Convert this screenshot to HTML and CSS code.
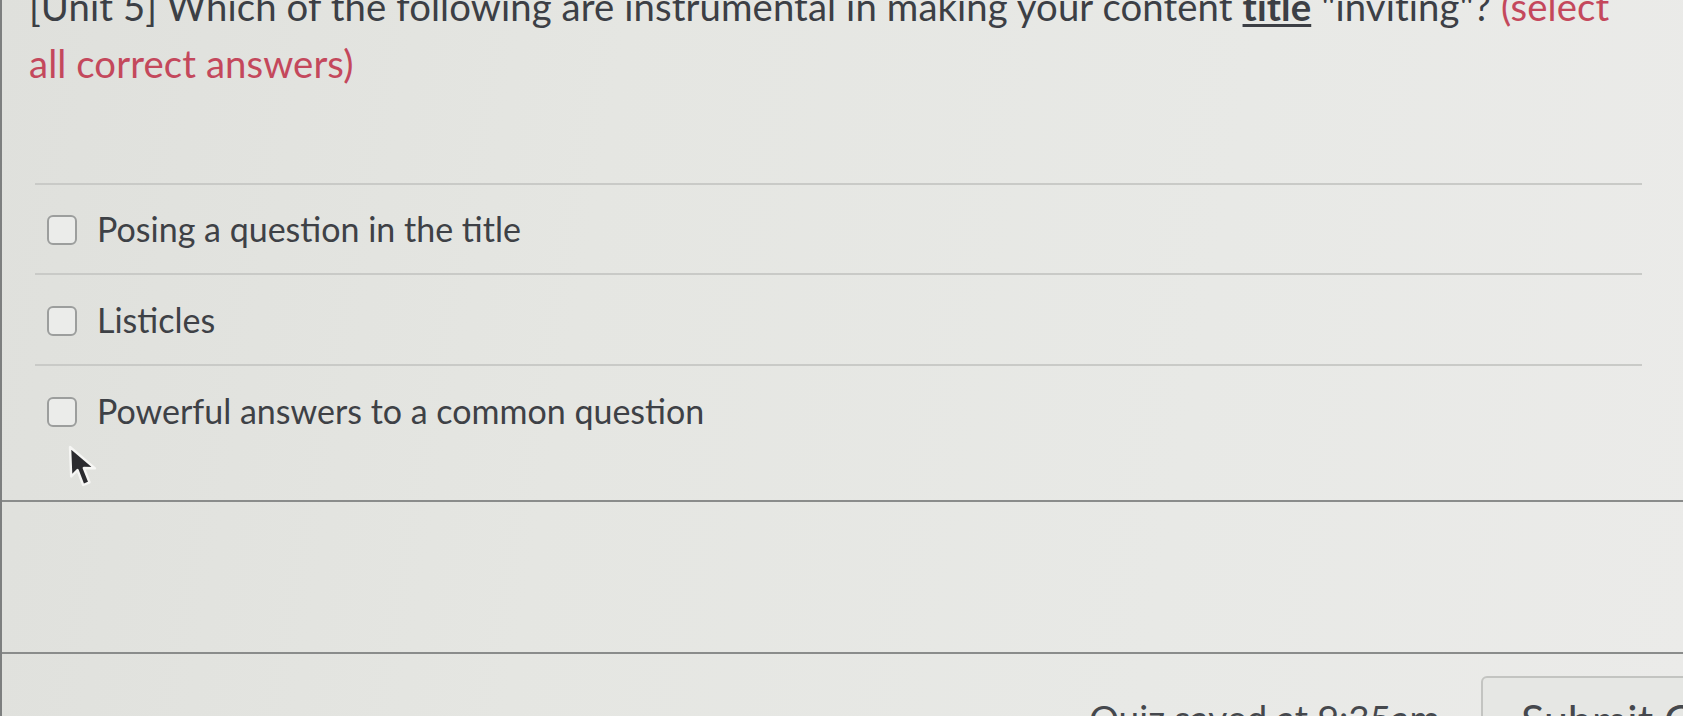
FILE: index.html
```html
<!DOCTYPE html>
<html lang="en">
<head>
<meta charset="utf-8">
<title>Quiz question</title>
<link rel="stylesheet" href="styles.css">
</head>
<body>
<div class="page">
  <section class="question">
    <div class="question-text">[Unit 5] Which of the following are instrumental in making your content <span class="em">title</span> "inviting"? <span class="hint">(select all correct answers)</span></div>
    <div class="answers">
      <label class="answer"><span class="box"></span><span class="label">Posing a question in the title</span></label>
      <label class="answer"><span class="box"></span><span class="label">Listicles</span></label>
      <label class="answer"><span class="box"></span><span class="label">Powerful answers to a common question</span></label>
    </div>
    <svg class="cursor" width="32" height="46" viewBox="0 0 32 46" aria-hidden="true">
      <path d="M4 3 L5.2 32.5 L11.5 26 L17.2 41 L23.5 38.3 L17.8 24 L29 24.3 Z" fill="#2b2b2f" stroke="#f6f6f4" stroke-width="2.4" stroke-linejoin="round"/>
    </svg>
  </section>
  <div class="gap"></div>
  <footer class="footer">
    <span class="saved">Quiz saved at 9:35am</span>
    <button class="submit" type="button">Submit Quiz</button>
  </footer>
</div>
</body>
</html>
```
FILE: styles.css
```css
html, body {
  margin: 0;
  padding: 0;
}
body {
  width: 1683px;
  height: 716px;
  overflow: hidden;
  background: linear-gradient(100deg, #dfe0dc 0%, #e5e6e2 35%, #e8e9e6 70%, #ebebe9 100%);
  font-family: Lato, "Noto Sans", sans-serif;
  color: #3c3f45;
}
.page {
  display: flex;
  flex-direction: column;
  height: 716px;
  box-sizing: border-box;
  border-left: 2px solid #7d7f7f;
}
.question {
  position: relative;
  border-bottom: 2px solid #8a8c8b;
  padding: 0 41px 0 27px;
  height: 502px;
  box-sizing: border-box;
  flex: none;
}
.question-text {
  font-size: 38.3px;
  line-height: 57px;
  margin-top: -22px;
  letter-spacing: 0.1px;
}
.em {
  font-weight: 700;
  text-decoration: underline;
  text-underline-offset: 3px;
}
.hint {
  color: #c4485c;
}
.answers {
  margin-top: 91px;
  margin-left: 6px;
  display: flex;
  flex-direction: column;
}
.answer {
  display: flex;
  align-items: center;
  gap: 20px;
  height: 91px;
  padding-left: 12px;
  border-top: 2px solid #c9cac7;
  box-sizing: border-box;
}
.answer:first-child {
  height: 90px;
}
.box {
  width: 30px;
  height: 30px;
  box-sizing: border-box;
  border: 2px solid #9c9e9d;
  border-radius: 6px;
  background: #ebecea;
  flex: none;
  margin-top: 2px;
}
.label {
  font-size: 34px;
  line-height: 44px;
  color: #3e4146;
}
.cursor {
  position: absolute;
  left: 64px;
  top: 444px;
}
.gap {
  height: 150px;
  flex: none;
  border-bottom: 2px solid #8a8c8b;
}
.footer {
  display: flex;
  align-items: flex-start;
  justify-content: flex-end;
  gap: 41px;
}
.saved {
  flex: none;
  font-size: 37px;
  line-height: 1.2;
  margin-top: 42px;
  color: #45484d;
}
.submit {
  flex: none;
  margin-top: 22px;
  width: 300px;
  height: 80px;
  margin-right: -98px;
  border: 2px solid #c3c4c1;
  border-radius: 6px;
  background: #e6e7e4;
  font-family: Lato, "Noto Sans", sans-serif;
  font-size: 43px;
  line-height: 1.2;
  color: #45484d;
  text-align: left;
  padding: 16px 0 0 38px;
  display: flex;
  align-items: flex-start;
  box-sizing: border-box;
}
```
